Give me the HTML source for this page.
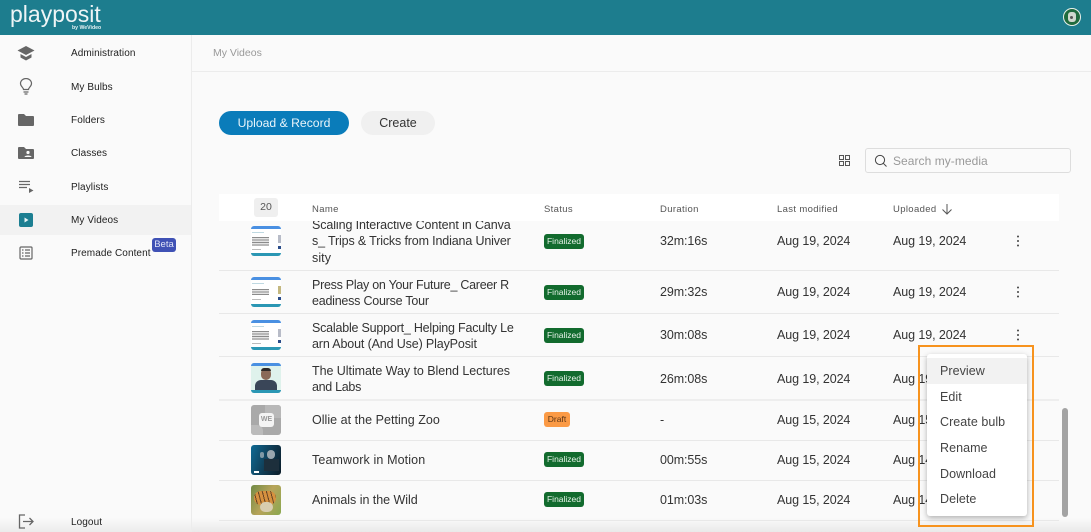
<!DOCTYPE html>
<html><head><meta charset="utf-8"><style>
*{box-sizing:border-box}
html,body{margin:0;padding:0;width:1091px;height:532px;overflow:hidden;background:#fafafa;font-family:"Liberation Sans",sans-serif;color:#333}
.a{position:absolute}
.t{position:absolute;white-space:nowrap;line-height:16px}
.nav{position:absolute;left:71px;font-size:10px;color:#222;white-space:nowrap;line-height:14px;letter-spacing:.08px}
.ln{position:absolute;left:219px;width:840px;height:1px;background:#e8e8e8}
.name{position:absolute;left:312px;font-size:12.5px;line-height:16px;color:#333;white-space:nowrap}
.date{position:absolute;font-size:12.5px;line-height:16px;color:#333;white-space:nowrap;letter-spacing:-.09px}
.dur{left:660px}.mod{left:777px}.up{left:893px}
.hd{position:absolute;top:203px;font-size:9.5px;color:#555;line-height:13px;white-space:nowrap;letter-spacing:.35px}
.fin{position:absolute;left:544px;width:40px;height:15px;background:#126b2e;border-radius:3px;color:#e8f3ea;font-size:8.5px;line-height:15px;text-align:center}
.th{position:absolute;left:251px;width:30px;height:30px;border-radius:3px;overflow:hidden;background:#fff;filter:blur(.35px)}
.mi{position:absolute;left:940px;font-size:12.5px;line-height:16px;color:#444;white-space:nowrap;letter-spacing:.05px}
svg{position:absolute;display:block}
</style></head><body>

<!-- main table area -->
<div class="ln" style="top:270px"></div>
<div class="ln" style="top:313px"></div>
<div class="ln" style="top:356px"></div>
<div class="ln" style="top:399px;height:2px;background:#eee"></div>
<div class="ln" style="top:440px"></div>
<div class="ln" style="top:480px"></div>
<div class="ln" style="top:520px"></div>

<!-- table rows -->
<div class="name" style="top:217px;letter-spacing:-.1px">Scaling Interactive Content in Canva</div>
<div class="name" style="top:233px;letter-spacing:-.15px">s_ Trips &amp; Tricks from Indiana Univer</div>
<div class="name" style="top:250px;letter-spacing:.07px">sity</div>
<div class="name" style="top:277px;letter-spacing:-.27px">Press Play on Your Future_ Career R</div>
<div class="name" style="top:293px;letter-spacing:-.23px">eadiness Course Tour</div>
<div class="name" style="top:320px;letter-spacing:-.21px">Scalable Support_ Helping Faculty Le</div>
<div class="name" style="top:336px;letter-spacing:-.14px">arn About (And Use) PlayPosit</div>
<div class="name" style="top:363px;letter-spacing:-.05px">The Ultimate Way to Blend Lectures</div>
<div class="name" style="top:379px;letter-spacing:-.3px">and Labs</div>
<div class="name" style="top:412px;letter-spacing:.03px">Ollie at the Petting Zoo</div>
<div class="name" style="top:452px;letter-spacing:.12px">Teamwork in Motion</div>
<div class="name" style="top:492px;letter-spacing:-.03px">Animals in the Wild</div>

<!-- thumbnails -->
<div class="th" style="top:226px"><div class="a" style="left:0;top:0;width:30px;height:3px;background:#4a90e2"></div><div class="a" style="left:1px;top:6px;width:12px;height:1px;background:#bfd9e2"></div><div class="a" style="left:1px;top:11px;width:17px;height:9px;background:repeating-linear-gradient(#8b8b8b 0 1px,#e4e4e4 1px 2.5px)"></div><div class="a" style="left:1px;top:23px;width:9px;height:1px;background:#bbb"></div><div class="a" style="left:27px;top:9px;width:3px;height:8px;background:#b8bcc8"></div><div class="a" style="left:27px;top:20px;width:3px;height:3px;background:#2a4c8a"></div><div class="a" style="left:0;bottom:0;width:30px;height:3px;background:#2b97b4"></div></div>
<div class="th" style="top:277px"><div class="a" style="left:0;top:0;width:30px;height:3px;background:#4a90e2"></div><div class="a" style="left:1px;top:6px;width:12px;height:1px;background:#bfd9e2"></div><div class="a" style="left:1px;top:12px;width:17px;height:6px;background:repeating-linear-gradient(#8b8b8b 0 1px,#e4e4e4 1px 2.5px)"></div><div class="a" style="left:1px;top:22px;width:9px;height:1px;background:#bbb"></div><div class="a" style="left:27px;top:9px;width:3px;height:8px;background:#c4b880"></div><div class="a" style="left:27px;top:20px;width:3px;height:3px;background:#2a4c8a"></div><div class="a" style="left:0;bottom:0;width:30px;height:3px;background:#2b97b4"></div></div>
<div class="th" style="top:320px"><div class="a" style="left:0;top:0;width:30px;height:3px;background:#4a90e2"></div><div class="a" style="left:1px;top:6px;width:12px;height:1px;background:#bfd9e2"></div><div class="a" style="left:1px;top:11px;width:17px;height:9px;background:repeating-linear-gradient(#8b8b8b 0 1px,#e4e4e4 1px 2.5px)"></div><div class="a" style="left:1px;top:23px;width:9px;height:1px;background:#bbb"></div><div class="a" style="left:27px;top:9px;width:3px;height:8px;background:#b8bcc8"></div><div class="a" style="left:27px;top:20px;width:3px;height:3px;background:#2a4c8a"></div><div class="a" style="left:0;bottom:0;width:30px;height:3px;background:#2b97b4"></div></div>
<div class="th" style="top:363px;background:#dff2ec"><div class="a" style="left:0;top:0;width:30px;height:3px;background:#4a90e2"></div><div class="a" style="left:10px;top:5px;width:10px;height:12px;border-radius:5px;background:#8a6a58"></div><div class="a" style="left:10px;top:5px;width:10px;height:3px;border-radius:5px 5px 0 0;background:#2f2a28"></div><div class="a" style="left:4px;top:17px;width:22px;height:11px;border-radius:6px 6px 0 0;background:#3a4658"></div><div class="a" style="left:0;bottom:0;width:30px;height:3px;background:#2b97b4"></div></div>
<div class="th" style="top:405px;background:#a9a9a9"><div class="a" style="left:14px;top:0;width:16px;height:13px;background:#b8b8b8;border-radius:0 0 0 6px"></div><div class="a" style="left:0;top:20px;width:12px;height:10px;background:#bbb;border-radius:0 6px 0 0"></div><div class="a" style="left:8px;top:8px;width:15px;height:14px;border-radius:3px;background:#f4f4f4;color:#999;font-size:7px;font-weight:bold;line-height:14px;text-align:center">WE</div></div>
<div class="th" style="top:445px;background:linear-gradient(110deg,#0f6a94,#10384e 60%,#0b1c28)"><div class="a" style="left:16px;top:5px;width:8px;height:9px;border-radius:4px;background:#9aa6ae"></div><div class="a" style="left:9px;top:7px;width:4px;height:6px;border-radius:2px;background:#7f98a5"></div><div class="a" style="left:13px;top:14px;width:15px;height:12px;background:#1d2f3c"></div><div class="a" style="left:3px;top:26px;width:5px;height:2px;background:#fff"></div></div>
<div class="th" style="top:485px;background:linear-gradient(120deg,#6f8a45,#b8a45a 50%,#8aa850)"><div class="a" style="left:3px;top:6px;width:22px;height:14px;border-radius:7px;background:repeating-linear-gradient(75deg,#d6913f 0 3px,#6a4626 3px 4px)"></div><div class="a" style="left:9px;top:17px;width:13px;height:10px;border-radius:5px;background:#d8cdb0"></div></div>

<!-- status -->
<div class="fin" style="top:234px">Finalized</div>
<div class="fin" style="top:285px">Finalized</div>
<div class="fin" style="top:328px">Finalized</div>
<div class="fin" style="top:371px">Finalized</div>
<div class="a" style="left:544px;top:412px;width:26px;height:15px;background:#fb9a45;border-radius:3px;color:#5a3516;font-size:8.5px;line-height:15px;text-align:center">Draft</div>
<div class="fin" style="top:452px">Finalized</div>
<div class="fin" style="top:492px">Finalized</div>

<!-- durations/dates -->
<div class="date dur" style="top:233px">32m:16s</div><div class="date mod" style="top:233px">Aug 19, 2024</div><div class="date up" style="top:233px">Aug 19, 2024</div>
<div class="date dur" style="top:284px">29m:32s</div><div class="date mod" style="top:284px">Aug 19, 2024</div><div class="date up" style="top:284px">Aug 19, 2024</div>
<div class="date dur" style="top:327px">30m:08s</div><div class="date mod" style="top:327px">Aug 19, 2024</div><div class="date up" style="top:327px">Aug 19, 2024</div>
<div class="date dur" style="top:371px">26m:08s</div><div class="date mod" style="top:371px">Aug 19, 2024</div><div class="date up" style="top:371px">Aug 19, 2024</div>
<div class="date dur" style="top:412px">-</div><div class="date mod" style="top:412px">Aug 15, 2024</div><div class="date up" style="top:412px">Aug 15, 2024</div>
<div class="date dur" style="top:452px">00m:55s</div><div class="date mod" style="top:452px">Aug 15, 2024</div><div class="date up" style="top:452px">Aug 14, 2024</div>
<div class="date dur" style="top:492px">01m:03s</div><div class="date mod" style="top:492px">Aug 15, 2024</div><div class="date up" style="top:492px">Aug 14, 2024</div>

<!-- kebabs -->
<svg style="left:1014px;top:234px" width="8" height="14" fill="#444"><circle cx="4" cy="2.5" r="1"/><circle cx="4" cy="7" r="1"/><circle cx="4" cy="11.5" r="1"/></svg>
<svg style="left:1014px;top:285px" width="8" height="14" fill="#444"><circle cx="4" cy="2.5" r="1"/><circle cx="4" cy="7" r="1"/><circle cx="4" cy="11.5" r="1"/></svg>
<svg style="left:1014px;top:328px" width="8" height="14" fill="#444"><circle cx="4" cy="2.5" r="1"/><circle cx="4" cy="7" r="1"/><circle cx="4" cy="11.5" r="1"/></svg>

<!-- table header -->
<div class="a" style="left:219px;top:194px;width:840px;height:27px;background:#fff"></div>
<div class="a" style="left:254px;top:198px;width:24px;height:19px;background:#efefef;border-radius:3px;color:#555;font-size:10.5px;line-height:19px;text-align:center">20</div>
<div class="hd" style="left:312px">Name</div>
<div class="hd" style="left:544px">Status</div>
<div class="hd" style="left:660px">Duration</div>
<div class="hd" style="left:777px">Last modified</div>
<div class="hd" style="left:893px">Uploaded</div>
<svg style="left:941px;top:203px" width="12" height="12" fill="none" stroke="#555" stroke-width="1"><path d="M6 1V11M1.5 6.5L6 11L10.5 6.5"/></svg>

<!-- top of main -->
<div class="t" style="left:213px;top:45px;font-size:10.5px;color:#999">My Videos</div>
<div class="a" style="left:192px;top:71px;width:899px;height:1px;background:#ececec"></div>
<div class="a" style="left:219px;top:111px;width:130px;height:24px;border-radius:12px;background:#0a7cba;color:#e8f4fa;font-size:12.2px;line-height:24px;text-align:center">Upload &amp; Record</div>
<div class="a" style="left:361px;top:111px;width:74px;height:24px;border-radius:12px;background:#f0f0f0;color:#333;font-size:12.5px;line-height:24px;text-align:center">Create</div>
<svg style="left:838px;top:154px" width="13" height="13" fill="none" stroke="#555" stroke-width="1"><rect x="1.5" y="1.5" width="4" height="4"/><rect x="7.5" y="1.5" width="4" height="4"/><rect x="1.5" y="7.5" width="4" height="4"/><rect x="7.5" y="7.5" width="4" height="4"/></svg>
<div class="a" style="left:865px;top:148px;width:206px;height:25px;border:1px solid #ddd;border-radius:3px;background:#fafafa"></div>
<svg style="left:874px;top:154px" width="14" height="14" fill="none" stroke="#444" stroke-width="1"><circle cx="6" cy="6" r="4.6"/><path d="M9.3 9.3L12.5 12.5"/></svg>
<div class="t" style="left:893px;top:153px;font-size:12px;color:#999;letter-spacing:.05px">Search my-media</div>

<!-- scrollbar -->
<div class="a" style="left:1062px;top:408px;width:6px;height:109px;border-radius:3px;background:#a3a3a3"></div>

<!-- bottom shade -->
<div class="a" style="left:192px;top:518px;width:899px;height:14px;background:linear-gradient(#fafafa00,#e9e9e9)"></div>

<!-- context menu -->
<div class="a" style="left:918px;top:345px;width:116px;height:182px;border:2px solid #f7931e"></div>
<div class="a" style="left:927px;top:354px;width:100px;height:162px;background:#fff;border-radius:3px;box-shadow:0 2px 6px rgba(0,0,0,.3)"></div>
<div class="a" style="left:927px;top:358px;width:100px;height:26px;background:#f2f2f2"></div>
<div class="mi" style="top:363px">Preview</div>
<div class="mi" style="top:389px">Edit</div>
<div class="mi" style="top:414px">Create bulb</div>
<div class="mi" style="top:440px">Rename</div>
<div class="mi" style="top:466px">Download</div>
<div class="mi" style="top:491px">Delete</div>

<!-- sidebar -->
<div class="a" style="left:0;top:35px;width:192px;height:497px;background:#fafafa;border-right:1px solid #ececec"></div>
<div class="a" style="left:0;top:205px;width:191px;height:30px;background:#f2f2f2"></div>
<div class="a" style="left:0;top:518px;width:191px;height:14px;background:linear-gradient(#fafafa00,#ececec)"></div>
<div class="nav" style="top:47px">Administration</div>
<div class="nav" style="top:81px">My Bulbs</div>
<div class="nav" style="top:114px">Folders</div>
<div class="nav" style="top:147px">Classes</div>
<div class="nav" style="top:181px">Playlists</div>
<div class="nav" style="top:214px">My Videos</div>
<div class="nav" style="top:247px">Premade Content</div>
<div class="nav" style="top:516px">Logout</div>
<div class="a" style="left:152px;top:238px;width:24px;height:14px;background:#3f51b5;border-radius:3px;color:#dfe3f7;font-size:9.5px;line-height:14px;text-align:center">Beta</div>

<!-- sidebar icons -->
<svg style="left:17px;top:45px" width="18" height="16" fill="#666"><path d="M0.5 5.5L9 1L17.5 5.5L9 10Z"/><path d="M3.5 9V12.5L9 15.5L14.5 12.5V9L9 12Z"/></svg>
<svg style="left:19px;top:78px" width="14" height="17" fill="none" stroke="#666" stroke-width="1.2"><path d="M4.5 11.5C4.5 9.5 1.5 8.5 1.5 5.5A5.5 5 0 0 1 12.5 5.5C12.5 8.5 9.5 9.5 9.5 11.5Z"/><path d="M4.5 14H9.5M5.5 16H8.5"/></svg>
<svg style="left:18px;top:113px" width="16" height="14" fill="#666"><path d="M1 1H6L8 3H15A1 1 0 0 1 16 4V12A1 1 0 0 1 15 13H1A1 1 0 0 1 0 12V2A1 1 0 0 1 1 1Z"/></svg>
<svg style="left:18px;top:146px" width="16" height="14" fill="#666"><path d="M1 1H6L8 3H15A1 1 0 0 1 16 4V12A1 1 0 0 1 15 13H1A1 1 0 0 1 0 12V2A1 1 0 0 1 1 1Z"/><circle cx="10" cy="6.5" r="1.6" fill="#fafafa"/><path d="M6.5 11C6.5 9 13.5 9 13.5 11Z" fill="#fafafa"/></svg>
<svg style="left:18px;top:180px" width="16" height="14" fill="#666"><path d="M1 1.5H12M1 4.5H12M1 7.5H9" stroke="#666" stroke-width="1.2"/><path d="M11 8L15.5 10.5L11 13Z"/></svg>
<div class="a" style="left:19px;top:213px;width:14px;height:14px;background:#1c7f92;border-radius:2px"></div>
<svg style="left:19px;top:213px" width="14" height="14" fill="#e8f4f6"><path d="M5.5 4.5L9.5 7L5.5 9.5Z"/></svg>
<svg style="left:19px;top:246px" width="14" height="14" fill="none" stroke="#666" stroke-width="1.2"><rect x="1" y="1" width="12" height="12" rx="1"/><path d="M6 4H11M6 7H11M6 10H11M3 4H4.5M3 7H4.5M3 10H4.5"/></svg>
<svg style="left:18px;top:514px" width="16" height="15" fill="none" stroke="#666" stroke-width="1.3"><path d="M7 1H1.5V14H7"/><path d="M5 7.5H15M11.5 4L15 7.5L11.5 11"/></svg>

<!-- header -->
<div class="a" style="left:0;top:0;width:1091px;height:35px;background:#1d7d8e"></div>
<div class="t" style="left:10px;top:1px;font-size:23px;line-height:26px;color:#eef5f6">playposit</div>
<div class="t" style="left:72px;top:24px;font-size:5.2px;line-height:8px;color:#e4f0f2;font-weight:bold">by WeVideo</div>
<div class="a" style="left:1063px;top:8px;width:18px;height:18px;border-radius:50%;background:#1f6b3e;border:1.5px solid #e8f0ea"></div>
<div class="a" style="left:1068px;top:12px;width:8px;height:10px;border-radius:3px;background:#cfd8cf"></div>
<div class="a" style="left:1070px;top:16px;width:3px;height:3px;border-radius:50%;background:#555"></div>
</body></html>
